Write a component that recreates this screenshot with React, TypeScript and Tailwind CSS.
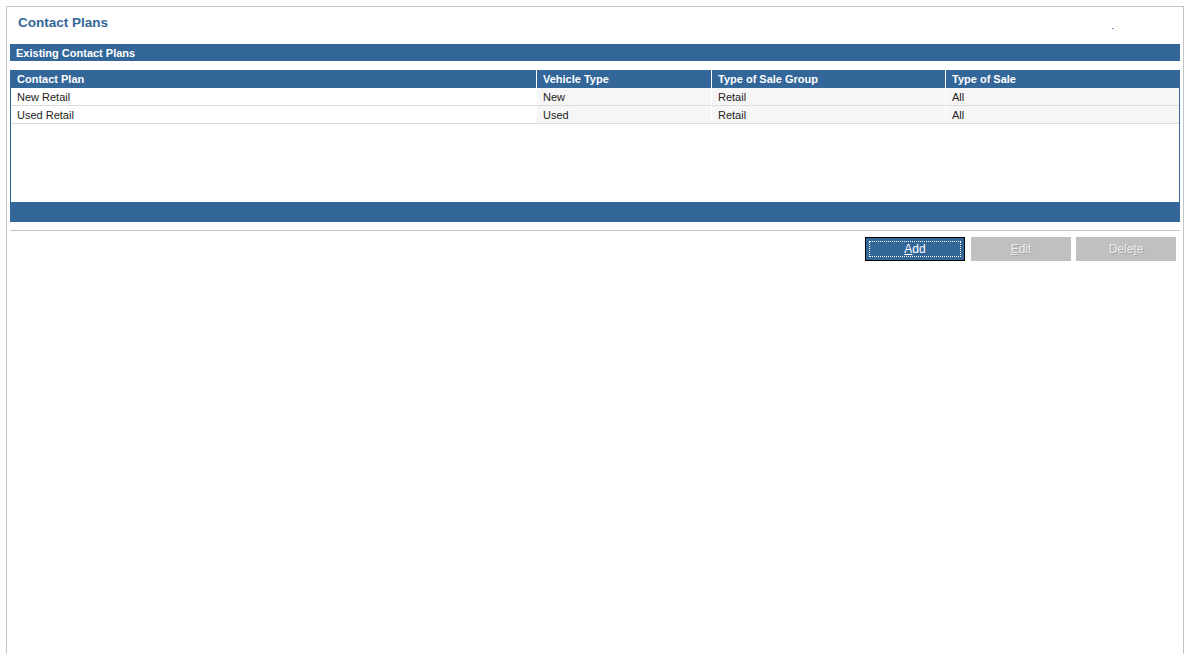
import React from "react";

const rows = [
  ["New Retail", "New", "Retail", "All"],
  ["Used Retail", "Used", "Retail", "All"],
];

export default function App() {
  return (
    <div
      className="w-full h-[654px] bg-white pl-[6px] pt-[6px]"
      style={{ fontFamily: '"Liberation Sans", Arial, sans-serif' }}
    >
      <div className="w-[1178px] h-[648px] border-t border-l border-r border-[#c4c4c4] px-[3px]">
        <div className="h-[37px] relative flex items-center pl-[8px]">
          <span className="text-[13.5px] font-bold text-[#336699] leading-none -mt-[6px]">Contact Plans</span>
          <span className="absolute left-[1102px] top-[21px] w-[2px] h-[1px] bg-[#6d8fc4]" />
        </div>
        <div className="h-[17px] bg-[#336699] flex items-center pl-[6px] pt-[1px]">
          <span className="text-[11px] font-bold text-white leading-none">Existing Contact Plans</span>
        </div>
        <div className="mt-[9px] w-[1170px] border-l border-r border-[#336699]">
          <div className="grid grid-cols-[525px_175px_234px_1fr] h-[18px] bg-[#336699]">
            {["Contact Plan", "Vehicle Type", "Type of Sale Group", "Type of Sale"].map((h, i) => (
              <div
                key={h}
                className={`flex items-center pt-[1px] pl-[6px] text-[11px] font-bold text-white leading-none ${i === 0 ? "" : "border-l border-white"}`}
              >
                {h}
              </div>
            ))}
          </div>
          <div className="h-[114px] bg-white">
            {rows.map((r, ri) => (
              <div key={ri} className="grid grid-cols-[525px_175px_234px_1fr] h-[18px] border-b border-[#dcdcdc]">
                {r.map((c, i) => (
                  <div
                    key={i}
                    className={`flex items-center pt-[2px] pl-[6px] text-[11px] text-[#222] leading-none ${i === 0 ? "bg-white" : "border-l border-white bg-[#f6f6f6]"}`}
                  >
                    {c}
                  </div>
                ))}
              </div>
            ))}
          </div>
          <div className="h-[20px] bg-[#336699]" />
        </div>
        <div className="mt-[8px] h-[1px] bg-[#c4c4c4] w-[1170px]" />
        <div className="mt-[6px] w-[1166px] flex justify-end gap-[6px]">
          <button className="w-[100px] h-[24px] bg-[#336699] border border-black p-[3px]">
            <div className="w-full h-full border border-dotted border-white flex items-center justify-center text-[12px] text-white leading-none">
              <span><span className="underline">A</span>dd</span>
            </div>
          </button>
          <button className="w-[100px] h-[24px] bg-[#c0c0c0] flex items-center justify-center text-[12px] text-[#ededed] leading-none [text-shadow:1px_1px_0_#a3a3a3]">
            <span><span className="underline">E</span>dit</span>
          </button>
          <button className="w-[100px] h-[24px] bg-[#c0c0c0] flex items-center justify-center text-[12px] text-[#ededed] leading-none [text-shadow:1px_1px_0_#a3a3a3] -ml-[1px]">
            <span>Dele<span className="underline">t</span>e</span>
          </button>
        </div>
      </div>
    </div>
  );
}
